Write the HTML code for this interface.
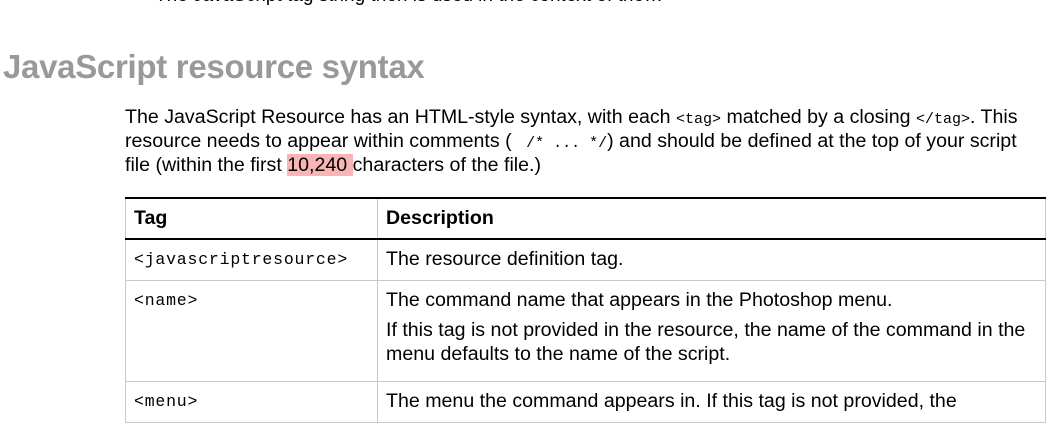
<!DOCTYPE html>
<html><head><style>
body{margin:0;width:1050px;height:412px;overflow:hidden;background:#fff;font-family:"Liberation Sans",sans-serif;color:#000;position:relative}
.top{position:absolute;left:155px;top:-15px;font-size:19px;white-space:nowrap}
h1{position:absolute;left:3px;top:48px;margin:0;font-size:33px;font-weight:bold;color:#999;letter-spacing:-0.3px;line-height:38px}
.p{position:absolute;left:125px;top:105px;width:930px;font-size:19.6px;line-height:24px;letter-spacing:0;white-space:nowrap}
code{font-family:"Liberation Mono",monospace;font-size:15px;line-height:1}
.hl{background:#f9b4b4}
table{position:absolute;left:125px;top:197px;width:921px;border-collapse:collapse;font-size:19.6px;letter-spacing:0;table-layout:fixed}
td,th{text-align:left;vertical-align:top;padding:0 8px;border:1px solid #c8c8c8;box-sizing:border-box;line-height:24px;white-space:nowrap}
th{border-top:2px solid #000;border-bottom:2px solid #000;height:41px;font-weight:bold;padding-top:7px}
td{height:41px;padding-top:7px}
td.c{font-family:"Liberation Mono",monospace;font-size:16.5px;letter-spacing:0.8px;padding-top:8px}
tr.r2 td{height:101px}
p{margin:0 0 6px 0;line-height:24px}
</style></head><body>
<div class="top">The JavaScript tag string then is used in the context of the…</div>
<h1>JavaScript resource syntax</h1>
<div class="p">The JavaScript Resource has an HTML-style syntax, with each <code>&lt;tag&gt;</code> matched by a closing <code>&lt;/tag&gt;</code>. This<br>resource needs to appear within comments ( <code>&nbsp;/* ... */</code>) and should be defined at the top of your script<br>file (within the first <span class="hl">10,240 </span>characters of the file.)</div>
<table>
<tr><th style="width:252px">Tag</th><th>Description</th></tr>
<tr><td class="c">&lt;javascriptresource&gt;</td><td>The resource definition tag.</td></tr>
<tr class="r2"><td class="c">&lt;name&gt;</td><td><p>The command name that appears in the Photoshop menu.</p><p>If this tag is not provided in the resource, the name of the command in the<br>menu defaults to the name of the script.</p></td></tr>
<tr><td class="c">&lt;menu&gt;</td><td>The menu the command appears in. If this tag is not provided, the</td></tr>
</table>
</body></html>
